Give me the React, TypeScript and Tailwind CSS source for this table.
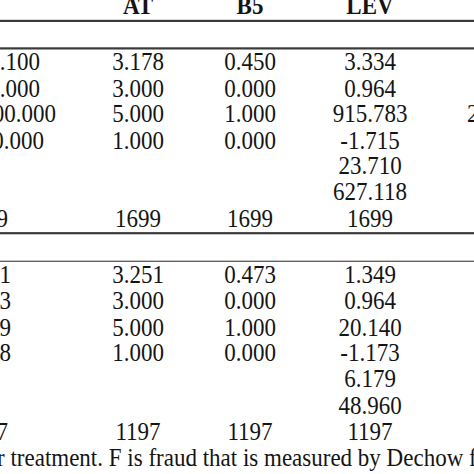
import React from 'react';

// --- Table data (visible part of a descriptive statistics table) ---
type Row = {
    first: string;
    firstPad: string;
    at: string;
    b5: string;
    lev: string;
    extra?: string;
};

const FRAUD_ROWS: Row[] = [
    { first: '6.100', firstPad: 'pr-[40px]', at: '3.178', b5: '0.450', lev: '3.334' },
    { first: '0.000', firstPad: 'pr-[40px]', at: '3.000', b5: '0.000', lev: '0.964' },
    { first: '100.000', firstPad: 'pr-[24px]', at: '5.000', b5: '1.000', lev: '915.783', extra: '21.452' },
    { first: '0.000', firstPad: 'pr-[36px]', at: '1.000', b5: '0.000', lev: '-1.715' },
    { first: '', firstPad: 'pr-[40px]', at: '', b5: '', lev: '23.710' },
    { first: '', firstPad: 'pr-[40px]', at: '', b5: '', lev: '627.118' },
    { first: '1699', firstPad: 'pr-[72px]', at: '1699', b5: '1699', lev: '1699' },
];

const NONFRAUD_ROWS: Row[] = [
    { first: '0.121', firstPad: 'pr-[69px]', at: '3.251', b5: '0.473', lev: '1.349' },
    { first: '0.013', firstPad: 'pr-[69px]', at: '3.000', b5: '0.000', lev: '0.964' },
    { first: '0.999', firstPad: 'pr-[69px]', at: '5.000', b5: '1.000', lev: '20.140' },
    { first: '0.008', firstPad: 'pr-[69px]', at: '1.000', b5: '0.000', lev: '-1.173' },
    { first: '', firstPad: 'pr-[69px]', at: '', b5: '', lev: '6.179' },
    { first: '', firstPad: 'pr-[69px]', at: '', b5: '', lev: '48.960' },
    { first: '1197', firstPad: 'pr-[72px]', at: '1197', b5: '1197', lev: '1197' },
];

const GRID = 'grid grid-cols-[80px_116px_108px_132px_124px] whitespace-nowrap';

const Rule = () => <div className="h-[1.4px] w-full bg-[#3a3a3a]" />;

const DataRow: React.FC<{ row: Row; height: string }> = ({ row, height }) => (
    <div className={`${GRID} ${height}`}>
        {/* first column is cut at the page edge: end-aligned so overflow goes left */}
        <div className={`flex justify-end ${row.firstPad}`}>
            <span className="shrink-0">{row.first}</span>
        </div>
        <div className="text-center">{row.at}</div>
        <div className="text-center">{row.b5}</div>
        <div className="text-center">{row.lev}</div>
        <div className="pl-[31px] text-left">{row.extra ?? ''}</div>
    </div>
);

export default function App() {
    return (
        <div
            className="h-[474px] w-[474px] overflow-hidden bg-white text-[23px] text-[#141414]"
            style={{ fontFamily: '"Liberation Serif", "Times New Roman", serif' }}
        >
            {/* the scanned table is a little taller than it is wide */}
            <div className="w-[560px] origin-top-left scale-y-[1.1]">
                {/* Header */}
                <div className={`${GRID} h-[18.2px] leading-[11.8px] font-bold`}>
                    <div />
                    <div className="text-center">AT</div>
                    <div className="text-center">B5</div>
                    <div className="text-center">LEV</div>
                    <div />
                </div>
                <Rule />

                {/* Fraud panel */}
                <div className="h-[23.6px]" />
                <Rule />
                <div className="pt-[0.4px] pb-[0.9px] leading-[23.64px]">
                    {FRAUD_ROWS.map((r, i) => (
                        <DataRow key={i} row={r} height="h-[23.64px]" />
                    ))}
                </div>
                <Rule />

                {/* Non-fraud panel */}
                <div className="h-[24px]" />
                <Rule />
                <div className="leading-[23.82px]">
                    {NONFRAUD_ROWS.map((r, i) => (
                        <DataRow key={i} row={r} height="h-[23.82px]" />
                    ))}
                </div>

                {/* Footnote */}
                <div className="-ml-[3px] pt-[0.8px] leading-[23.9px] whitespace-nowrap">
                    r treatment. F is fraud that is measured by Dechow f-score
                </div>
            </div>
        </div>
    );
}
